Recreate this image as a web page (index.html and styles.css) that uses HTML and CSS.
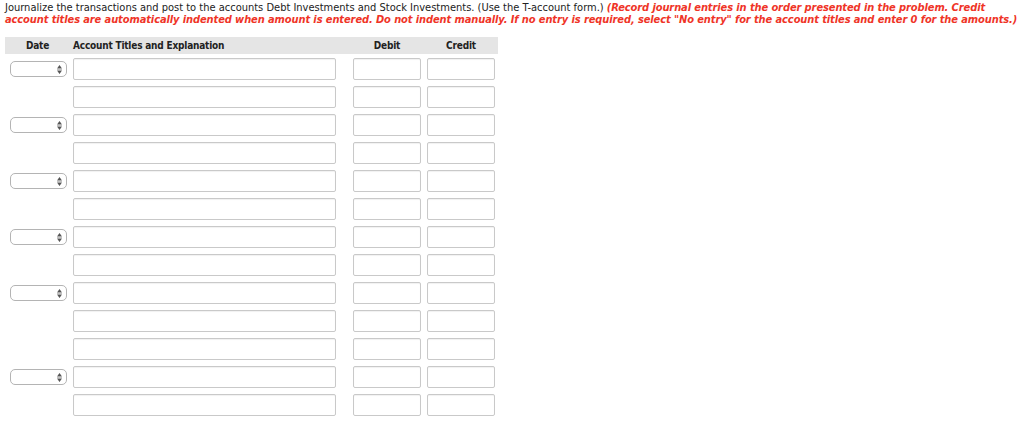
FILE: index.html
```html
<!DOCTYPE html>
<html>
<head>
<meta charset="utf-8">
<link rel="stylesheet" href="styles.css">
</head>
<body>
<p class="prompt">Journalize the transactions and post to the accounts Debt Investments and Stock Investments. (Use the T-account form.) <em class="note">(Record journal entries in the order presented in the problem. Credit<br>account titles are automatically indented when amount is entered. Do not indent manually. If no entry is required, select "No entry" for the account titles and enter 0 for the amounts.)</em></p>

<div class="journal">
  <div class="head">
    <div class="c-date">Date</div>
    <div class="c-acct"><span>Account Titles and Explanation</span></div>
    <div class="c-debit"><span>Debit</span></div>
    <div class="c-credit"><span>Credit</span></div>
  </div>
  <div class="rows">
    <div class="row"><div class="c-date"><div class="sel"><svg width="5" height="9" viewBox="0 0 5 9"><path d="M2.5 0 L5 3.5 L0 3.5 Z M0 5.5 L5 5.5 L2.5 9 Z" fill="#555"/><rect x="0" y="4.2" width="5" height="0.6" fill="#999"/></svg></div></div><div class="c-acct"><div class="inp"></div></div><div class="c-debit"><div class="inp"></div></div><div class="c-credit"><div class="inp"></div></div></div>
    <div class="row"><div class="c-date"></div><div class="c-acct"><div class="inp"></div></div><div class="c-debit"><div class="inp"></div></div><div class="c-credit"><div class="inp"></div></div></div>
    <div class="row"><div class="c-date"><div class="sel"><svg width="5" height="9" viewBox="0 0 5 9"><path d="M2.5 0 L5 3.5 L0 3.5 Z M0 5.5 L5 5.5 L2.5 9 Z" fill="#555"/><rect x="0" y="4.2" width="5" height="0.6" fill="#999"/></svg></div></div><div class="c-acct"><div class="inp"></div></div><div class="c-debit"><div class="inp"></div></div><div class="c-credit"><div class="inp"></div></div></div>
    <div class="row"><div class="c-date"></div><div class="c-acct"><div class="inp"></div></div><div class="c-debit"><div class="inp"></div></div><div class="c-credit"><div class="inp"></div></div></div>
    <div class="row"><div class="c-date"><div class="sel"><svg width="5" height="9" viewBox="0 0 5 9"><path d="M2.5 0 L5 3.5 L0 3.5 Z M0 5.5 L5 5.5 L2.5 9 Z" fill="#555"/><rect x="0" y="4.2" width="5" height="0.6" fill="#999"/></svg></div></div><div class="c-acct"><div class="inp"></div></div><div class="c-debit"><div class="inp"></div></div><div class="c-credit"><div class="inp"></div></div></div>
    <div class="row"><div class="c-date"></div><div class="c-acct"><div class="inp"></div></div><div class="c-debit"><div class="inp"></div></div><div class="c-credit"><div class="inp"></div></div></div>
    <div class="row"><div class="c-date"><div class="sel"><svg width="5" height="9" viewBox="0 0 5 9"><path d="M2.5 0 L5 3.5 L0 3.5 Z M0 5.5 L5 5.5 L2.5 9 Z" fill="#555"/><rect x="0" y="4.2" width="5" height="0.6" fill="#999"/></svg></div></div><div class="c-acct"><div class="inp"></div></div><div class="c-debit"><div class="inp"></div></div><div class="c-credit"><div class="inp"></div></div></div>
    <div class="row"><div class="c-date"></div><div class="c-acct"><div class="inp"></div></div><div class="c-debit"><div class="inp"></div></div><div class="c-credit"><div class="inp"></div></div></div>
    <div class="row"><div class="c-date"><div class="sel"><svg width="5" height="9" viewBox="0 0 5 9"><path d="M2.5 0 L5 3.5 L0 3.5 Z M0 5.5 L5 5.5 L2.5 9 Z" fill="#555"/><rect x="0" y="4.2" width="5" height="0.6" fill="#999"/></svg></div></div><div class="c-acct"><div class="inp"></div></div><div class="c-debit"><div class="inp"></div></div><div class="c-credit"><div class="inp"></div></div></div>
    <div class="row"><div class="c-date"></div><div class="c-acct"><div class="inp"></div></div><div class="c-debit"><div class="inp"></div></div><div class="c-credit"><div class="inp"></div></div></div>
    <div class="row"><div class="c-date"></div><div class="c-acct"><div class="inp"></div></div><div class="c-debit"><div class="inp"></div></div><div class="c-credit"><div class="inp"></div></div></div>
    <div class="row"><div class="c-date"><div class="sel"><svg width="5" height="9" viewBox="0 0 5 9"><path d="M2.5 0 L5 3.5 L0 3.5 Z M0 5.5 L5 5.5 L2.5 9 Z" fill="#555"/><rect x="0" y="4.2" width="5" height="0.6" fill="#999"/></svg></div></div><div class="c-acct"><div class="inp"></div></div><div class="c-debit"><div class="inp"></div></div><div class="c-credit"><div class="inp"></div></div></div>
    <div class="row"><div class="c-date"></div><div class="c-acct"><div class="inp"></div></div><div class="c-debit"><div class="inp"></div></div><div class="c-credit"><div class="inp"></div></div></div>
  </div>
</div>
</body>
</html>
```

FILE: styles.css
```css
html, body {
  margin: 0;
  padding: 0;
  background: #fff;
}
body {
  padding: 2px 5px 0 5px;
  font-family: "DejaVu Sans Condensed", "DejaVu Sans", Verdana, sans-serif;
  font-stretch: condensed;
  color: #222;
}
.prompt {
  margin: 0;
  font-size: 11px;
  line-height: 12px;
  white-space: nowrap;
}
.note {
  color: #ef3427;
  font-weight: bold;
  font-style: italic;
  letter-spacing: -0.1px;
}
.journal {
  margin-top: 11px;
  width: 493px;
}
.head, .row {
  display: grid;
  grid-template-columns: 65px 271px 83px 74px;
  align-items: center;
}
.head {
  height: 17px;
  background: #e5e5e5;
  font-size: 10px;
  font-weight: bold;
  letter-spacing: -0.2px;
  color: #222;
}
.head .c-date {
  text-align: center;
}
.head .c-acct span {
  display: block;
  padding-left: 3px;
}
.head .c-debit span {
  display: block;
  margin-left: 12px;
  width: 68px;
  text-align: center;
}
.head .c-credit span {
  display: block;
  margin-left: 3px;
  width: 68px;
  text-align: center;
}
.rows {
  display: flex;
  flex-direction: column;
  gap: 6px;
  margin-top: 4px;
}
.row {
  height: 22px;
}
.c-date {
  display: flex;
  justify-content: center;
}
.sel {
  box-sizing: border-box;
  width: 57px;
  height: 16px;
  margin-left: 2px;
  border: 1px solid #b4b4b4;
  border-radius: 5px;
  background: #fff;
  display: flex;
  align-items: center;
  justify-content: flex-end;
  padding-right: 4px;
}
.sel svg {
  display: block;
}
.inp {
  box-sizing: border-box;
  height: 22px;
  border: 1px solid #c9c9c9;
  border-radius: 2px;
  background: #fff;
  box-shadow: inset 0 1px 1px rgba(0,0,0,0.06);
}
.c-acct .inp {
  margin-left: 3px;
  width: 263px;
}
.c-debit .inp {
  margin-left: 12px;
  width: 68px;
}
.c-credit .inp {
  margin-left: 3px;
  width: 68px;
}
```
